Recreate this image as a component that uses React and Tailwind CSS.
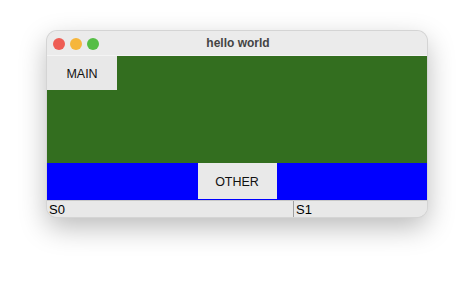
export default function App() {
  return (
    <div className="w-[474px] h-[281px] bg-white pt-[31px] pl-[47px]" style={{ fontFamily: '"Liberation Sans", Arial, sans-serif' }}>
      <div className="w-[380px] h-[186px] rounded-[10px] overflow-hidden bg-[#ececec] shadow-[0_10px_28px_rgba(0,0,0,0.28)] ring-1 ring-[#d4d4d4] flex flex-col">
        <div className="h-[25px] shrink-0 bg-[#ebebeb] relative flex items-center justify-center border-b border-[#f4f4f4]">
          <div className="absolute left-[6px] top-[7px] flex gap-[5px]">
            <div className="w-[12px] h-[12px] rounded-full bg-[#ee5d54]" />
            <div className="w-[12px] h-[12px] rounded-full bg-[#f6b63c]" />
            <div className="w-[12px] h-[12px] rounded-full bg-[#55be45]" />
          </div>
          <span className="text-[12px] font-bold text-[#444444] leading-none pl-[2px]">hello world</span>
        </div>
        <div className="h-[107px] shrink-0 bg-[#336e1f]">
          <div className="w-[70px] h-[34px] bg-[#e8e8e8] flex items-center justify-center pt-[3px] text-[12.5px] text-[#111]">MAIN</div>
        </div>
        <div className="h-[37px] shrink-0 bg-[#0000ff] flex justify-center">
          <div className="w-[79px] h-[36px] bg-[#e9e9e9] flex items-center justify-center pt-[3px] text-[12.5px] text-[#111]">OTHER</div>
        </div>
        <div className="h-[17px] shrink-0 bg-[#e8e8e8] flex border-t border-[#c8c8c8]">
          <div className="w-[247px] border-r border-[#a0a0a0] pl-[2px] text-[13px] leading-[17px] text-black">S0</div>
          <div className="flex-1 pl-[2px] text-[13px] leading-[17px] text-black">S1</div>
        </div>
      </div>
    </div>
  );
}
